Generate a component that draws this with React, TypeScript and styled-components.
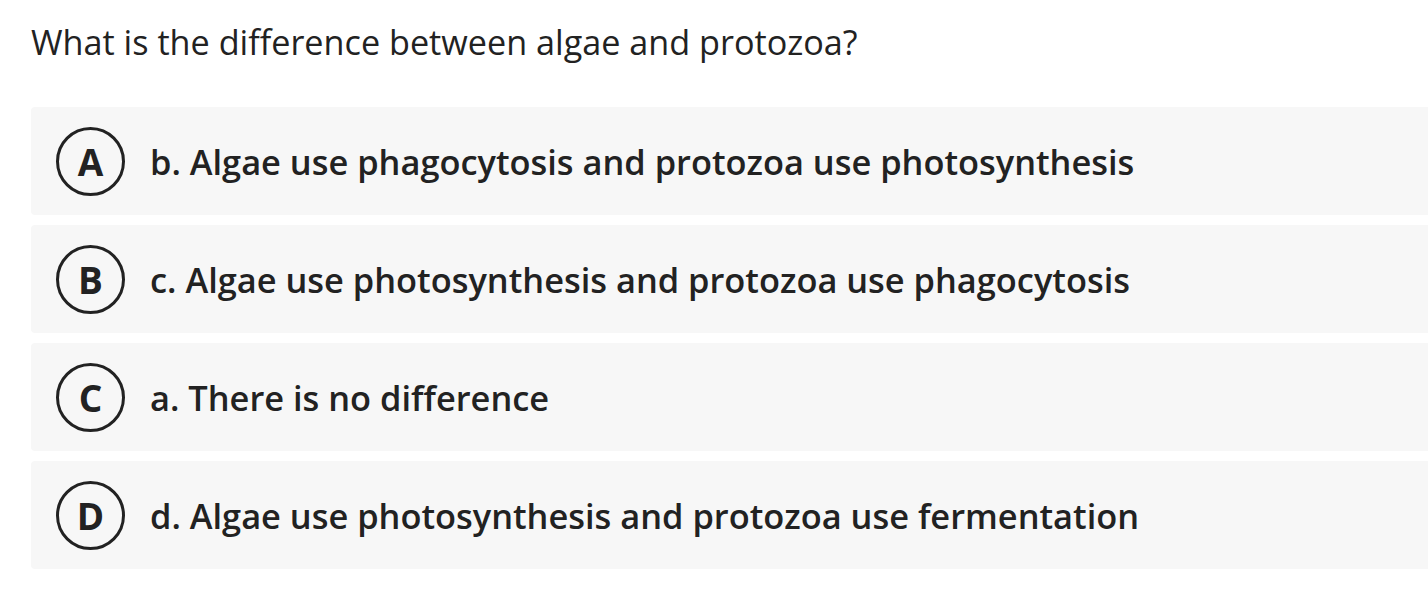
import React from "react";
import styled, { createGlobalStyle } from "styled-components";

const GlobalStyle = createGlobalStyle`
  body {
    margin: 0;
    background: #ffffff;
    overflow: hidden;
    font-family: "Open Sans", "Noto Sans", sans-serif;
    color: #222222;
  }
`;

const Page = styled.div`
  width: 1460px;
  padding: 18px 0 0 31px;
  box-sizing: border-box;
`;

const Question = styled.h1`
  margin: 0 0 41px 0;
  font-size: 34.2px;
  line-height: 48px;
  font-weight: 400;
  color: #222222;
`;

const OptionList = styled.div`
  display: flex;
  flex-direction: column;
  gap: 10px;
`;

const Option = styled.div`
  display: flex;
  align-items: center;
  gap: 25px;
  height: 108px;
  padding-left: 25px;
  border-radius: 4px;
  background: #f7f7f7;
  box-sizing: border-box;
`;

const Badge = styled.div`
  display: flex;
  align-items: center;
  justify-content: center;
  width: 69px;
  height: 69px;
  flex-shrink: 0;
  border: 3.5px solid #222222;
  border-radius: 50%;
  box-sizing: border-box;
  font-size: 37px;
  font-weight: 700;
  line-height: 1;
`;

const OptionText = styled.span`
  font-size: 34.4px;
  font-weight: 600;
  color: #222222;
`;

const options = [
  { letter: "A", text: "b. Algae use phagocytosis and protozoa use photosynthesis" },
  { letter: "B", text: "c. Algae use photosynthesis and protozoa use phagocytosis" },
  { letter: "C", text: "a. There is no difference" },
  { letter: "D", text: "d. Algae use photosynthesis and protozoa use fermentation" },
];

export default function App() {
  return (
    <>
      <GlobalStyle />
      <Page>
        <Question>What is the difference between algae and protozoa?</Question>
        <OptionList>
          {options.map((o) => (
            <Option key={o.letter}>
              <Badge>{o.letter}</Badge>
              <OptionText>{o.text}</OptionText>
            </Option>
          ))}
        </OptionList>
      </Page>
    </>
  );
}
